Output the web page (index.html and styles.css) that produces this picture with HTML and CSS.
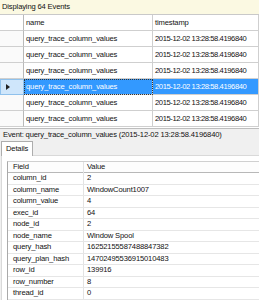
FILE: index.html
```
<!DOCTYPE html>
<html>
<head>
<meta charset="utf-8">
<link rel="stylesheet" href="styles.css">
</head>
<body>
<div class="app">
  <div class="status">Displaying 64 Events</div>
  <div class="grid">
    <div class="row head">
      <div class="cell rh"></div>
      <div class="cell c1">name</div>
      <div class="cell c2">timestamp</div>
    </div>
    <div class="row">
      <div class="cell rh"></div>
      <div class="cell c1">query_trace_column_values</div>
      <div class="cell c2">2015-12-02 13:28:58.4196840</div>
    </div>
    <div class="row">
      <div class="cell rh"></div>
      <div class="cell c1">query_trace_column_values</div>
      <div class="cell c2">2015-12-02 13:28:58.4196840</div>
    </div>
    <div class="row">
      <div class="cell rh"></div>
      <div class="cell c1">query_trace_column_values</div>
      <div class="cell c2">2015-12-02 13:28:58.4196840</div>
    </div>
    <div class="row sel">
      <div class="cell rh"><span class="arrow"></span></div>
      <div class="cell c1">query_trace_column_values</div>
      <div class="cell c2">2015-12-02 13:28:58.4196840</div>
    </div>
    <div class="row">
      <div class="cell rh"></div>
      <div class="cell c1">query_trace_column_values</div>
      <div class="cell c2">2015-12-02 13:28:58.4196840</div>
    </div>
    <div class="row">
      <div class="cell rh"></div>
      <div class="cell c1">query_trace_column_values</div>
      <div class="cell c2">2015-12-02 13:28:58.4196840</div>
    </div>
  </div>
  <div class="lower">
    <div class="event-title">Event: query_trace_column_values (2015-12-02 13:28:58.4196840)</div>
    <div class="tabs"><div class="tab">Details</div><div class="tabline"></div></div>
    <div class="tabpage">
      <div class="props">
        <div class="prow phead"><div class="pf">Field</div><div class="pv">Value</div></div>
        <div class="prow"><div class="pf">column_id</div><div class="pv">2</div></div>
        <div class="prow"><div class="pf">column_name</div><div class="pv">WindowCount1007</div></div>
        <div class="prow"><div class="pf">column_value</div><div class="pv">4</div></div>
        <div class="prow"><div class="pf">exec_id</div><div class="pv">64</div></div>
        <div class="prow"><div class="pf">node_id</div><div class="pv">2</div></div>
        <div class="prow"><div class="pf">node_name</div><div class="pv">Window Spool</div></div>
        <div class="prow"><div class="pf">query_hash</div><div class="pv">16252155587488847382</div></div>
        <div class="prow"><div class="pf">query_plan_hash</div><div class="pv">14702495536915010483</div></div>
        <div class="prow"><div class="pf">row_id</div><div class="pv">139916</div></div>
        <div class="prow"><div class="pf">row_number</div><div class="pv">8</div></div>
        <div class="prow"><div class="pf">thread_id</div><div class="pv">0</div></div>
      </div>
    </div>
  </div>
</div>
</body>
</html>
```
FILE: styles.css
```
html, body {
  margin: 0;
  padding: 0;
}
body {
  width: 259px;
  height: 300px;
  overflow: hidden;
  font-family: "Liberation Sans", Arial, sans-serif;
  font-size: 7.6px;
  letter-spacing: -0.15px;
  color: #111;
  background: #f0f0f0;
}
.app {
  display: flex;
  flex-direction: column;
  height: 300px;
}
.status {
  height: 15px;
  box-sizing: border-box;
  background: #fbf9e2;
  border-bottom: 1px solid #c9c9c9;
  padding-left: 2px;
  line-height: 14px;
}
.grid {
  height: 113px;
  overflow: hidden;
  background: #fff;
}
.row {
  display: grid;
  grid-template-columns: 24px 129px 1fr;
  height: 16px;
  box-sizing: border-box;
}
.cell {
  box-sizing: border-box;
  border-right: 1px solid #cfcfcf;
  border-bottom: 1px solid #cfcfcf;
  line-height: 15px;
  padding-left: 2px;
  white-space: nowrap;
  overflow: hidden;
}
.cell.c2 {
  letter-spacing: -0.4px;
}
.cell.rh {
  background: #fafafa;
  border-right-color: #b9b9b9;
}
.row.head .cell {
  background: #fff;
  letter-spacing: -0.15px;
}
.row.sel .c1,
.row.sel .c2 {
  background: #3399ff;
  color: #fff;
}
.row.sel .c1 {
  outline: 1px dotted #333;
  outline-offset: -1px;
}
.row.sel .rh {
  background: #cfe6fb;
  border: 1px solid #8fc1ec;
  display: flex;
  align-items: center;
  padding-left: 5px;
}
.arrow {
  width: 0;
  height: 0;
  border-top: 3.5px solid transparent;
  border-bottom: 3.5px solid transparent;
  border-left: 4px solid #222;
}
.lower {
  flex: 1;
  display: flex;
  flex-direction: column;
  background: #f0f0f0;
  border-top: 1px solid #bdbdbd;
}
.event-title {
  height: 12px;
  line-height: 12px;
  padding: 0 0 0 3px;
  white-space: nowrap;
}
.tabs {
  display: flex;
  align-items: flex-end;
  height: 15px;
  padding-left: 1px;
}
.tab {
  height: 15px;
  box-sizing: border-box;
  padding: 0 4px;
  line-height: 14px;
  background: #fff;
  border: 1px solid #adadad;
  border-bottom: none;
}
.tabline {
  flex: 1;
  border-bottom: 1px solid #d9d9d9;
}
.tabpage {
  flex: 1;
  background: #fff;
  margin-left: 1px;
  border-left: 1px solid #d9d9d9;
  padding: 5px 0 0 5px;
  overflow: hidden;
}
.props {
  border-left: 1px solid #a9a9a9;
  border-top: 1px solid #d0d0d0;
}
.prow {
  display: grid;
  grid-template-columns: 76px 1fr;
  height: 11.5px;
  box-sizing: border-box;
  border-bottom: 1px solid #e6e6e6;
  line-height: 10.5px;
  white-space: nowrap;
}
.prow.phead {
  height: 11px;
  border-bottom: 1px solid #b8b8b8;
  background: #fdfdfd;
}
.pf {
  padding-left: 5px;
  border-right: 1px solid #e3e3e3;
}
.pv {
  padding-left: 3px;
  overflow: hidden;
}
```
